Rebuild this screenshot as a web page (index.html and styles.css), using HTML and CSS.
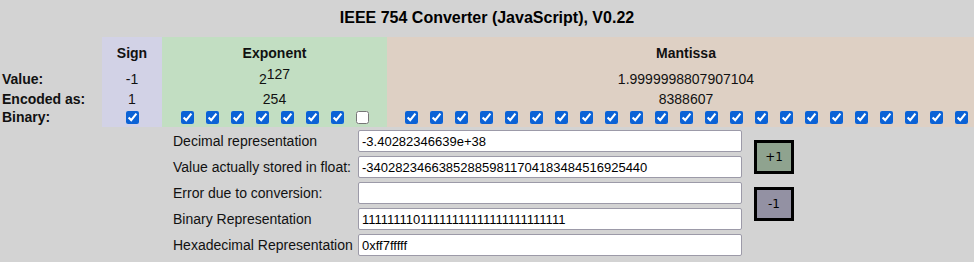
FILE: index.html
```html
<!DOCTYPE html>
<html lang="en">
<head>
    <meta charset="UTF-8">
    <title>IEEE 754 Converter</title>
    <link rel="stylesheet" href="styles.css">
</head>
<body>
    <h1>IEEE 754 Converter (JavaScript), V0.22</h1>

    <div class="bits">
        <div class="label"></div>
        <div class="sign head">Sign</div>
        <div class="exponent head">Exponent</div>
        <div class="mantissa head">Mantissa</div>

        <div class="label">Value:</div>
        <div class="sign">-1</div>
        <div class="exponent">2<sup>127</sup></div>
        <div class="mantissa">1.9999998807907104</div>

        <div class="label">Encoded as:</div>
        <div class="sign">1</div>
        <div class="exponent">254</div>
        <div class="mantissa">8388607</div>

        <div class="label">Binary:</div>
        <div class="sign boxes"><input type="checkbox" checked></div>
        <div class="exponent boxes">
            <input type="checkbox" checked><input type="checkbox" checked><input type="checkbox" checked><input type="checkbox" checked>
            <input type="checkbox" checked><input type="checkbox" checked><input type="checkbox" checked><input type="checkbox">
        </div>
        <div class="mantissa boxes">
            <input type="checkbox" checked><input type="checkbox" checked><input type="checkbox" checked><input type="checkbox" checked>
            <input type="checkbox" checked><input type="checkbox" checked><input type="checkbox" checked><input type="checkbox" checked>
            <input type="checkbox" checked><input type="checkbox" checked><input type="checkbox" checked><input type="checkbox" checked>
            <input type="checkbox" checked><input type="checkbox" checked><input type="checkbox" checked><input type="checkbox" checked>
            <input type="checkbox" checked><input type="checkbox" checked><input type="checkbox" checked><input type="checkbox" checked>
            <input type="checkbox" checked><input type="checkbox" checked><input type="checkbox" checked>
        </div>
    </div>

    <div class="repr">
        <label for="decimal">Decimal representation</label>
        <input type="text" id="decimal" value="-3.40282346639e+38">
        <div class="steps">
            <button class="plus">+1</button>
            <button class="minus">-1</button>
        </div>

        <label for="stored">Value actually stored in float:</label>
        <input type="text" id="stored" value="-340282346638528859811704183484516925440">

        <label for="error">Error due to conversion:</label>
        <input type="text" id="error" value="">

        <label for="binary">Binary Representation</label>
        <input type="text" id="binary" value="11111111011111111111111111111111">

        <label for="hex">Hexadecimal Representation</label>
        <input type="text" id="hex" value="0xff7fffff">
    </div>
</body>
</html>
```

FILE: styles.css
```css
html, body {
    overflow: hidden;
}
body {
    margin: 0;
    background-color: #d3d3d3;
    font-family: "Liberation Sans", Arial, sans-serif;
    font-size: 14px;
    color: #111;
}
h1 {
    font-size: 16px;
    line-height: 20px;
    text-align: center;
    margin: 8px 0 9px;
    color: #000;
}
.bits {
    display: grid;
    grid-template-columns: 102px 60px 225px 598px;
    grid-template-rows: 32px 21px 18px 19px;
}
.bits > div {
    text-align: center;
}
.bits .label {
    text-align: left;
    padding-left: 2px;
    font-weight: bold;
}
.head {
    font-weight: bold;
    line-height: 32px;
}
.bits > div:nth-child(n+5) {
    line-height: 20px;
}
.bits > div:nth-child(n+9) {
    line-height: 18px;
}
.sign {
    background-color: #d2d2e6;
}
.exponent {
    background-color: #c2dec2;
}
.mantissa {
    background-color: #ded0c4;
}
sup {
    font-size: 14px;
    line-height: 0;
    vertical-align: 5px;
}
.boxes {
    display: flex;
    justify-content: center;
    align-items: center;
    gap: 12px;
}
.boxes input {
    margin: 0;
    width: 13px;
    height: 13px;
    accent-color: #0b62d6;
}
.repr {
    display: grid;
    grid-template-columns: 185px 384px 52px;
    grid-auto-rows: 22px;
    row-gap: 4px;
    margin: 3px 0 0 173px;
}
.repr label {
    align-self: center;
}
.repr input {
    box-sizing: border-box;
    height: 22px;
    border: 1px solid #9c9aa8;
    border-radius: 2px;
    padding: 0 3px;
    font-family: "Liberation Sans", Arial, sans-serif;
    font-size: 13px;
    color: #000;
    background: #fff;
}
.steps {
    grid-column: 3;
    grid-row: 1 / 6;
    display: flex;
    flex-direction: column;
    gap: 13px;
    padding: 10px 0 0 12px;
}
.steps button {
    width: 40px;
    height: 34px;
    border: 3px solid #000;
    padding: 0;
    font-family: "DejaVu Sans", sans-serif;
    font-size: 12px;
    color: #000;
}
.plus {
    background-color: #8fa38f;
}
.minus {
    background-color: #9391a3;
}
```
